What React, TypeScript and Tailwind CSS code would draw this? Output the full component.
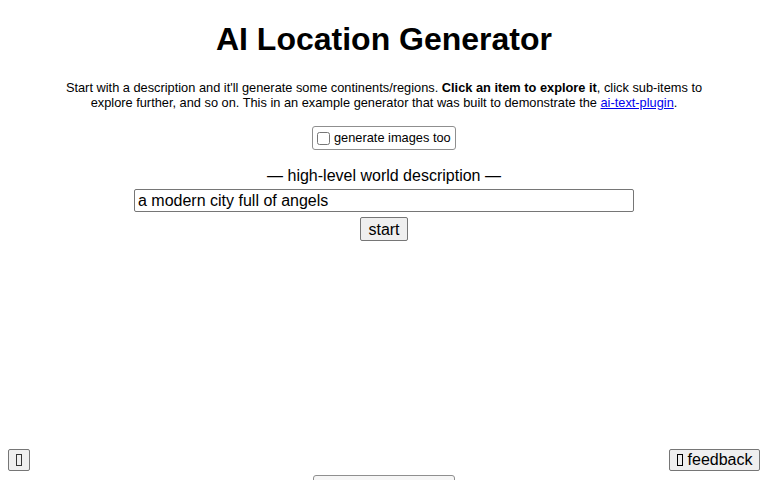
import { useState } from 'react'

// Stand-in for the emoji glyph that has no font here: a hollow box
function Tofu() {
  return <span className="inline-block h-[12px] w-[6px] border border-current align-[-1px]" />
}

export default function App() {
  const [description, setDescription] = useState('a modern city full of angels')
  const [withImages, setWithImages] = useState(false)

  return (
    <div className="relative h-[480px] overflow-hidden bg-white text-black [font-family:'Liberation_Sans',Arial,sans-serif]">
      <h1 className="pt-[21px] text-center text-[32px] leading-[37px] font-bold">AI Location Generator</h1>

      <p className="mx-auto mt-[22px] max-w-[650px] text-center text-[12.8px] leading-[15px]">
        Start with a description and it'll generate some continents/regions. <b>Click an item to explore it</b>, click
        sub-items to explore further, and so on. This in an example generator that was built to demonstrate the{' '}
        <a href="#" className="text-[#0000ee] underline">
          ai-text-plugin
        </a>
        .
      </p>

      <div className="mt-[16px] flex justify-center">
        <label className="flex h-[24px] w-[144px] items-center gap-[4px] rounded-[3px] border border-[#8f8f8f] pl-[4px] text-[12.8px]">
          <input
            type="checkbox"
            checked={withImages}
            onChange={(e) => setWithImages(e.target.checked)}
            className="m-0 h-[13px] w-[13px]"
          />
          generate images too
        </label>
      </div>

      <div className="mt-[17px] text-center text-[16px] leading-[18px]">— high-level world description —</div>

      <div className="mt-[4px] flex justify-center">
        <input
          value={description}
          onChange={(e) => setDescription(e.target.value)}
          className="h-[23px] w-[500px] rounded-[2px] border border-[#767676] px-[3px] text-[16px] outline-none"
        />
      </div>

      <div className="mt-[5px] flex justify-center">
        <button className="h-[24px] w-[48px] rounded-[2px] border border-[#767676] bg-[#efefef] text-[16px]">start</button>
      </div>

      <button className="absolute top-[449px] left-[8px] flex h-[22px] w-[22px] items-center justify-center rounded-[2px] border border-[#767676] bg-[#efefef] text-[#333]">
        <Tofu />
      </button>

      <button className="absolute top-[449px] left-[669px] flex h-[22px] w-[91px] items-center justify-center gap-[5px] rounded-[2px] border border-[#767676] bg-[#efefef] text-[16px]">
        <Tofu />
        feedback
      </button>

      <div className="absolute top-[475px] left-[313px] h-[24px] w-[142px] rounded-[3px] border border-[#8f8f8f] bg-[#f6f6f6]" />
    </div>
  )
}
